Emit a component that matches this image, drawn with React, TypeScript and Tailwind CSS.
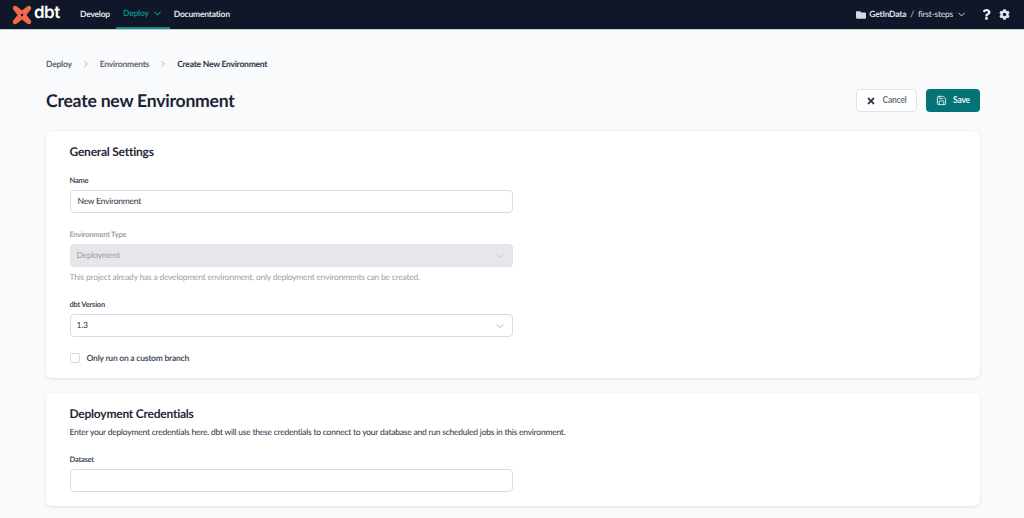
import { ChevronDown, ChevronRight, Save } from 'lucide-react'
import { FaCog, FaFolder, FaQuestion, FaTimes } from 'react-icons/fa'

const FONT = "font-['Lato',sans-serif] [text-rendering:geometricPrecision] tracking-[-0.23px]"

function Logo() {
  return (
    <svg width="20" height="20" viewBox="0 0 20 20" className="shrink-0">
      <path
        d="M3 .8c.9 0 1.600.4 2.300 1L10 5.600l4.700-3.800c.7-.6 1.400-1 2.300-1 1.300 0 2.200 1 2.200 2.200 0 .9-.4 1.600-1 2.300L14.400 10l3.800 4.700c.6.7 1 1.400 1 2.300 0 1.200-.9 2.200-2.200 2.200-.9 0-1.600-.4-2.300-1L10 14.400l-4.700 3.800c-.7.6-1.400 1-2.300 1-1.300 0-2.200-1-2.200-2.200 0-.9.4-1.600 1-2.300L5.600 10 1.800 5.300c-.6-.7-1-1.400-1-2.300C.8 1.800 1.700.8 3 .8z"
        fill="#f4684c"
      />
      <circle cx="10" cy="10" r="1.300" fill="#0f1729" />
    </svg>
  )
}

function Field({ label, muted, children }: { label: string; muted?: boolean; children: React.ReactNode }) {
  return (
    <div className="w-[443.500px]">
      <p className={`text-[7.500px] leading-[10px] font-bold mb-[4px] ${muted ? 'text-[#9aa1ac]' : 'text-[#3f4a5a]'}`}>
        {label}
      </p>
      {children}
    </div>
  )
}

function SelectBox({ value, disabled }: { value: string; disabled?: boolean }) {
  return (
    <div
      className={`h-[23px] rounded-[4px] border flex items-center justify-between pl-[6px] pr-[6px] text-[8.500px] ${
        disabled ? 'bg-[#e5e7eb] border-[#dfe2e7] text-[#99a0aa]' : 'bg-white border-[#d8dbe1] text-[#2a3444]'
      }`}
    >
      <span>{value}</span>
      <ChevronDown size={12} strokeWidth={1.500} className={disabled ? 'text-[#b9bec7]' : 'text-[#9aa1ac]'} />
    </div>
  )
}

export default function App() {
  return (
    <div className={`h-[518px] overflow-hidden bg-[#f9fafc] ${FONT}`}>
      <header className="h-[30px] bg-[#0f1729] border-b border-[#c6c9ce] flex items-center justify-between pl-[12px] pr-[14px]">
        <div className="flex items-center h-full">
          <Logo />
          <span className="ml-[2px] text-[17px] leading-none font-semibold text-white tracking-[-0.5px] font-['Inter',sans-serif] pb-[2px] w-[35px]">
            dbt
          </span>
          <nav className="flex h-full text-[8.500px] font-bold text-[#e2e5ea] ml-[11px]">
            <a className="flex items-center w-[29px] whitespace-nowrap">Develop</a>
            <a className="flex items-center gap-[3px] ml-[7px] pl-[7px] pr-[7px] text-[#0b8a85] border-b-2 border-[#0f8f8a] h-full">
              Deploy
              <ChevronDown size={11} strokeWidth={2.500} />
            </a>
            <a className="flex items-center ml-[4px]">Documentation</a>
          </nav>
        </div>
        <div className="flex items-center text-[8.500px] text-[#dfe2e7]">
          <FaFolder size={10} className="text-[#d6d9de]" />
          <span className="ml-[3px] font-bold">GetInData</span>
          <span className="mx-[4px]">/</span>
          <span>first-steps</span>
          <ChevronDown size={11} strokeWidth={2} className="ml-[3px]" />
          <FaQuestion size={11} className="ml-[14px] text-[#eceef1]" />
          <FaCog size={11} className="ml-[7px] text-[#e2e5ea]" />
        </div>
      </header>

      <main className="pl-[46px] pr-[44px]">
        <div className="pt-[28px] flex items-center text-[8.500px] leading-[12px] font-bold text-[#5c6675]">
          <span>Deploy</span>
          <ChevronRight size={10} className="mx-[9px] text-[#9aa1ac]" />
          <span>Environments</span>
          <ChevronRight size={10} className="mx-[9px] text-[#9aa1ac]" />
          <span className="text-[#2a3444]">Create New Environment</span>
        </div>

        <div className="mt-[19px] flex items-center justify-between">
          <h1 className="text-[17.600px] leading-[22px] font-bold text-[#1a2333]">Create new Environment</h1>
          <div className="flex gap-[9px] text-[8.500px] font-bold">
            <button className="h-[23px] w-[61px] rounded-[4px] bg-white border border-[#dfe2e7] text-[#6b7482] flex items-center justify-center gap-[6px]">
              <FaTimes size={10} className="text-[#2a3444]" />
              Cancel
            </button>
            <button className="h-[23px] w-[54px] rounded-[4px] bg-[#047377] text-[#e8f2f2] flex items-center justify-center gap-[6px]">
              <Save size={11} />
              Save
            </button>
          </div>
        </div>

        <section className="mt-[19px] h-[247px] bg-white rounded-[6px] shadow-[0_1px_3px_rgba(20,30,50,0.12)] pl-[23.500px] pt-[13px]">
          <h2 className="text-[12px] leading-[16px] font-bold text-[#1f2937]">General Settings</h2>
          <div className="mt-[16px] flex flex-col">
            <Field label="Name">
              <div className="h-[23px] rounded-[4px] border border-[#d8dbe1] bg-white flex items-center pl-[7px] text-[8.500px] text-[#2a3444]">
                New Environment
              </div>
            </Field>
            <div className="mt-[17px]">
              <Field label="Environment Type" muted>
                <SelectBox value="Deployment" disabled />
                <p className="mt-[4px] text-[8.500px] leading-[12px] text-[#9aa1ac]">
                  This project already has a development environment, only deployment environments can be created.
                </p>
              </Field>
            </div>
            <div className="mt-[17px]">
              <Field label="dbt Version">
                <SelectBox value="1.3" />
              </Field>
            </div>
            <label className="mt-[15px] flex items-center">
              <span className="w-[10px] h-[10px] rounded-[2px] border border-[#d8dbe1] bg-white" />
              <span className="ml-[7px] text-[8.500px] leading-[12px] font-bold text-[#4b5563]">
                Only run on a custom branch
              </span>
            </label>
          </div>
        </section>

        <section className="mt-[15px] h-[113px] bg-white rounded-[6px] shadow-[0_1px_3px_rgba(20,30,50,0.12)] pl-[23.500px] pt-[13px]">
          <h2 className="text-[12px] leading-[16px] font-bold text-[#1f2937]">Deployment Credentials</h2>
          <p className="mt-[4px] text-[8.500px] leading-[12px] text-[#2a3444]">
            Enter your deployment credentials here. dbt will use these credentials to connect to your database and run
            scheduled jobs in this environment.
          </p>
          <div className="mt-[17px]">
            <Field label="Dataset">
              <div className="h-[23px] rounded-[4px] border border-[#d8dbe1] bg-white" />
            </Field>
          </div>
        </section>
      </main>
    </div>
  )
}
